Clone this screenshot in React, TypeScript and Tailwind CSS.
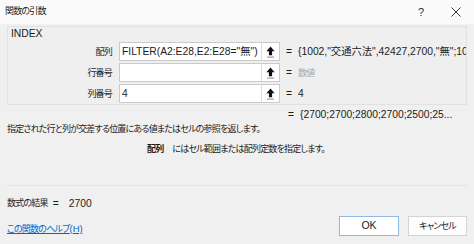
import React from "react";

// Excel "関数の引数" dialog for INDEX

function J({ children, className = "" }: { children: React.ReactNode; className?: string }) {
    return <span className={`text-[9px] tracking-[-0.8px] ${className}`}>{children}</span>;
}

function CollapseIcon() {
    return (
        <svg width="9" height="12" viewBox="0 0 9 12">
            <path d="M4.5 0.5 L8.6 5.2 H6.1 V9.2 H2.9 V5.2 H0.4 Z" fill="#111" />
            <rect x="1" y="10.6" width="7" height="1" fill="#8a8a8a" />
        </svg>
    );
}

const args = [
    { label: "配列", input: 'FILTER(A2:E28,E2:E28="無")', value: '{1002,"交通六法",42427,2700,"無";1002,"民法",42430', muted: false },
    { label: "行番号", input: "", value: "数値", muted: true },
    { label: "列番号", input: "4", value: "4", muted: false },
];

export default function App() {
    return (
        <div className="flex h-[244px] w-[474px] flex-col overflow-hidden bg-[#f0f0f0] text-[10.3px] text-[#1b1b1b] [font-family:'Liberation_Sans','Noto_Sans_CJK_JP',sans-serif] [font-feature-settings:'palt']">
            {/* Title bar */}
            <div className="flex h-[24px] shrink-0 items-center justify-between bg-[#fafafa] pl-[5px]">
                <J className="text-[9.5px]">関数の引数</J>
                <div className="flex items-center">
                    <span className="w-[34px] text-center text-[11px] text-[#333]">?</span>
                    <span className="flex w-[36px] justify-center">
                        <svg width="10" height="10" viewBox="0 0 10 10">
                            <path d="M0.5 0.5 L9.5 9.5 M9.5 0.5 L0.5 9.5" stroke="#333" strokeWidth="1" />
                        </svg>
                    </span>
                </div>
            </div>

            <div className="flex flex-1 flex-col px-[7px] pt-[2px]">
                {/* Argument group */}
                <div className="flex flex-col gap-[2px] border border-[#e2e2e2] bg-[#efefef] pb-[1px]">
                    <div className="flex h-[13px] items-center pl-[3px] pt-[1px]">INDEX</div>
                    {args.map((a) => (
                        <div key={a.label} className="flex h-[19px] items-center">
                            <div className="w-[105px] pr-[1px] text-right">
                                <J>{a.label}</J>
                            </div>
                            <div className="ml-[6px] flex h-[19px] w-[161px] shrink-0 border border-[#cacaca] bg-white">
                                <div className="flex flex-1 items-center overflow-hidden whitespace-nowrap pl-[2px]">{a.input}</div>
                                <div className="flex w-[18px] items-center justify-center border-l border-[#dcdcdc]">
                                    <CollapseIcon />
                                </div>
                            </div>
                            <span className="w-[18px] shrink-0 text-center">=</span>
                            <span className={`min-w-0 flex-1 overflow-hidden whitespace-nowrap ${a.muted ? "text-[#a6a6a6]" : ""}`}>
                                {a.muted ? <J>{a.value}</J> : a.value}
                            </span>
                        </div>
                    ))}
                </div>

                {/* Result of function */}
                <div className="mt-[3px] flex h-[14px] items-center pl-[275px]">
                    <span className="w-[18px] text-center">=</span>
                    <span>{"{2700;2700;2800;2700;2500;25..."}</span>
                </div>
                <div className="mt-[1px] flex h-[14px] items-center">
                    <J>指定された行と列が交差する位置にある値またはセルの参照を返します。</J>
                </div>
                <div className="mt-[6px] flex h-[14px] items-center pl-[140px]">
                    <J className="font-bold">配列</J>
                    <J className="ml-[9px]">にはセル範囲または配列定数を指定します。</J>
                </div>

                <div className="mt-[28px] border-t border-[#e4e4e4]" />

                <div className="mt-[11px] flex h-[14px] items-center">
                    <J>数式の結果</J>
                    <span className="ml-[5px]">=</span>
                    <span className="ml-[10px]">2700</span>
                </div>

                <div className="mt-[5px] flex items-center justify-between">
                    <a href="#" className="mt-[5px] text-[#0066cc] underline">
                        <J>この関数のヘルプ</J>
                        <span className="text-[9.5px]">(H)</span>
                    </a>
                    <div className="flex gap-[9px]">
                        <button className="flex h-[20px] w-[60px] items-center justify-center border border-[#8fb8e3] bg-white text-[10.5px]">
                            OK
                        </button>
                        <button className="flex h-[20px] w-[59px] items-center justify-center border border-[#d4d4d4] bg-[#fdfdfd]">
                            <J>キャンセル</J>
                        </button>
                    </div>
                </div>
            </div>
        </div>
    );
}
